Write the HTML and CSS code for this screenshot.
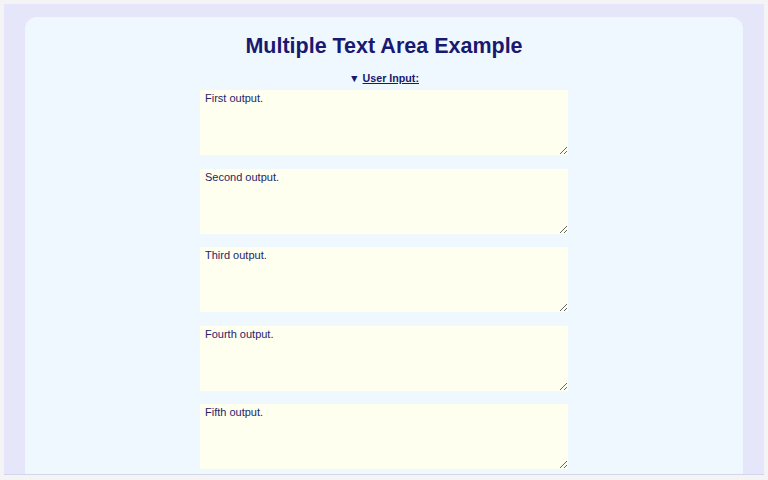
FILE: index.html
```html
<!DOCTYPE html>
<html>
<head>
<meta charset="utf-8">
<title>Multiple Text Area Example</title>
<link rel="stylesheet" href="styles.css">
</head>
<body>
<div class="frame">
  <div class="card">
    <h1 class="title">Multiple Text Area Example</h1>
    <details class="group" open>
      <summary class="summary">▼ <span class="summary-label">User Input:</span></summary>
      <div class="areas">
        <textarea class="area">First output.</textarea>
        <textarea class="area">Second output.</textarea>
        <textarea class="area">Third output.</textarea>
        <textarea class="area">Fourth output.</textarea>
        <textarea class="area">Fifth output.</textarea>
      </div>
    </details>
  </div>
</div>
</body>
</html>
```
FILE: styles.css
```css
html, body {
  margin: 0;
  padding: 0;
  background: #f4f4f6;
}
body {
  font-family: "Liberation Sans", Arial, sans-serif;
  color: #191970;
}
.frame {
  margin: 4px 4px 0 4px;
  height: 471px;
  box-sizing: border-box;
  background: #e6e6fa;
  padding: 13px 21px 0 21px;
  overflow: hidden;
  border-bottom: 1px solid #d2d6e6;
}
.card {
  background: #f0f8ff;
  border-radius: 12px 12px 0 0;
  height: 100%;
  padding-top: 16px;
  box-sizing: border-box;
}
.title {
  margin: 0;
  font-size: 21.5px;
  line-height: 26px;
  font-weight: bold;
  text-align: center;
  color: #191970;
}
.group {
  margin-top: 12px;
}
.summary {
  list-style: none;
  text-align: center;
  font-size: 10.7px;
  line-height: 14px;
  font-weight: bold;
  color: #191970;
  cursor: pointer;
}
.summary::-webkit-details-marker {
  display: none;
}
.summary-label {
  text-decoration: underline;
}
.areas {
  display: flex;
  flex-direction: column;
  align-items: center;
  gap: 13.5px;
  margin-top: 5px;
}
.area {
  display: block;
  width: 368px;
  height: 65px;
  box-sizing: border-box;
  margin: 0;
  border: none;
  outline: none;
  background: #fffff0;
  padding: 2px 5px;
  font-family: "Liberation Sans", Arial, sans-serif;
  font-size: 11px;
  line-height: 13px;
  color: #24246a;
}
```
